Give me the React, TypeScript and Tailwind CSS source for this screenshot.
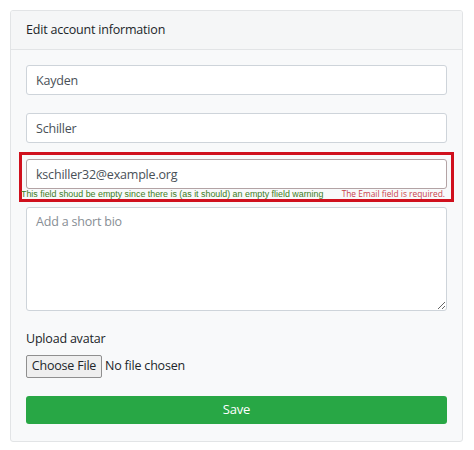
export default function App() {
  return (
    <div className="h-[450px] w-[474px] bg-white pl-[10px] pt-[10px] font-['Open_Sans','Noto_Sans',sans-serif] text-[12.5px] tracking-[-0.2px] text-[#212529]">
      <div className="w-[453px] overflow-hidden rounded-[3px] border border-[#e2e4e6] bg-[#f8f9fa]">
        <div className="flex h-[39px] items-center border-b border-[#e2e4e6] bg-[#f5f6f7] px-[15px] text-[12.5px]">
          Edit account information
        </div>
        <form className="px-[15px] pb-[17px] pt-[15px]">
          <input
            defaultValue="Kayden"
            className="block h-[30px] w-full rounded-[3px] border border-[#ced4da] bg-white px-[9px] text-[#495057] outline-none"
          />
          <input
            defaultValue="Schiller"
            className="mt-[18px] block h-[30px] w-full rounded-[3px] border border-[#ced4da] bg-white px-[9px] text-[#495057] outline-none"
          />
          <div className="-mx-[7px] mt-[9px] border-[3px] border-[#d0101d] px-[4px] pt-[4px]">
            <input
              defaultValue="kschiller32@example.org"
              className="block h-[30px] w-full rounded-[3px] border border-[#b3a3a5] bg-white px-[9px] text-[#495057] outline-none"
            />
            <div className="flex h-[10px] items-center justify-between whitespace-nowrap leading-none tracking-normal">
              <span className="-ml-[5px] font-['Liberation_Sans',Arial,sans-serif] text-[8.9px] text-[#3d7d24]">
                This field shoud be empty since there is (as it should) an empty flield warning
              </span>
              <span className="mr-[2px] text-[8.4px] text-[#c8414b]">The Email field is required.</span>
            </div>
          </div>
          <textarea
            placeholder="Add a short bio"
            className="mt-[5px] block h-[104px] w-full resize-y rounded-[3px] border border-[#ced4da] bg-white px-[9px] py-[5px] text-[#495057] outline-none placeholder:text-[#878e95]"
          />
          <label className="mt-[19px] block leading-[18px]">Upload avatar</label>
          <div className="mt-[7px] flex items-center whitespace-nowrap">
            <span className="flex h-[23px] w-[76px] items-center justify-center rounded-[2px] border border-[#8f8f8f] bg-[#efefef]">
              Choose File
            </span>
            <span className="ml-[3px]">No file chosen</span>
          </div>
          <button
            type="button"
            className="mt-[18px] flex h-[28px] w-full items-center justify-center rounded-[3px] bg-[#28a745] text-[13px] text-white"
          >
            Save
          </button>
        </form>
      </div>
    </div>
  );
}
